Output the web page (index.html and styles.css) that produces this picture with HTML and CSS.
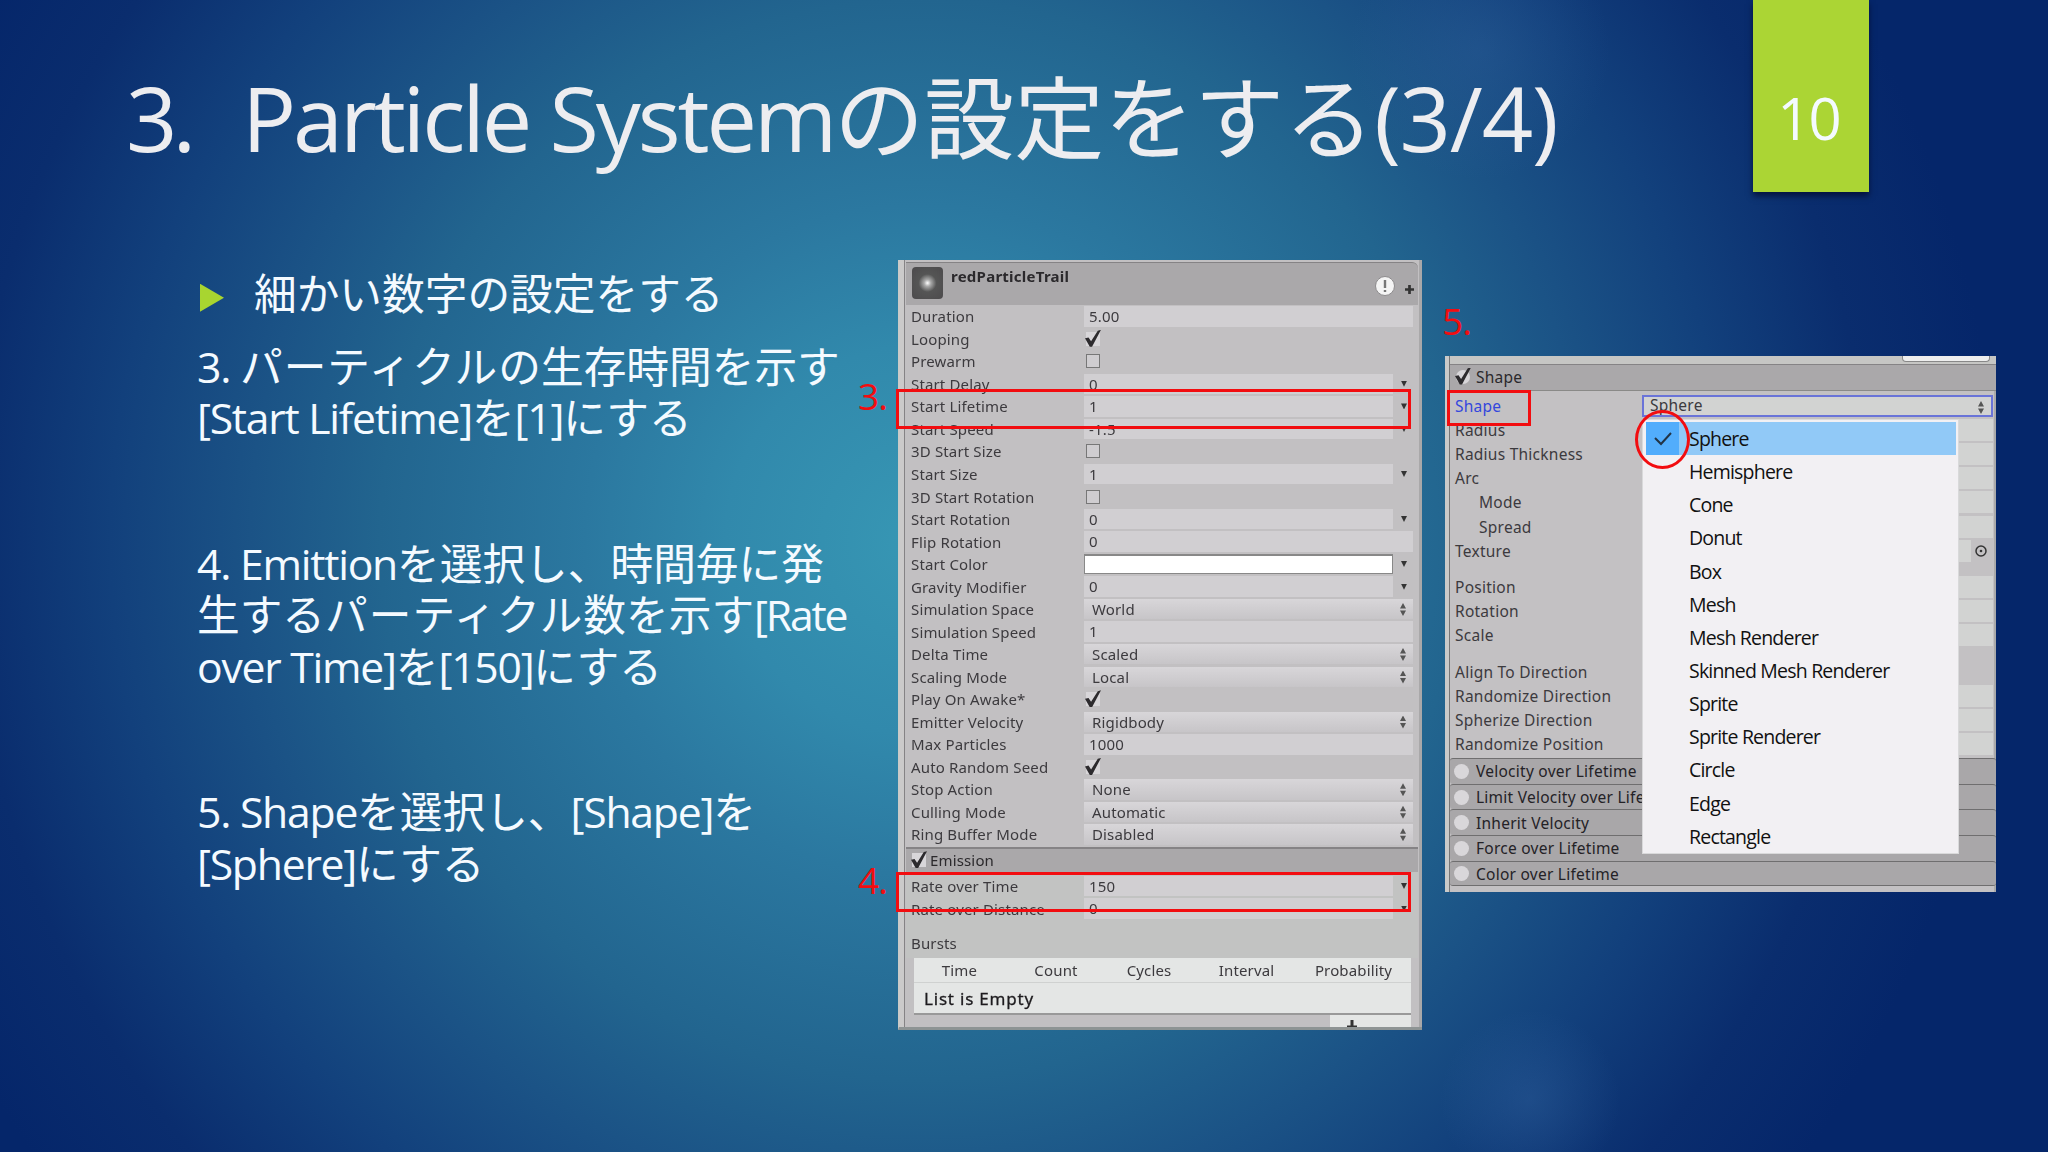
FILE: index.html
```
<!DOCTYPE html>
<html lang="ja">
<head>
  <meta charset="UTF-8" />
  <meta name="viewport" content="width=device-width, initial-scale=1.0" />
  <title>3. Particle Systemの設定をする(3/4)</title>
  <link rel="stylesheet" href="styles.css">
</head>
<body>

  <div class="slide">
    <header class="slide-header">
      <h1><span class="num">3.</span><span class="en">Particle System</span>の設定をする<span class="tail">(3/4)</span></h1>
      <div class="page-number">10</div>
    </header>

    <main class="content">
      <div class="text">
        <p class="bullet"><span class="arrow"></span>細かい数字の設定をする</p>
        <p><span class="en">3. </span><span class="kana">パーティクル</span>の生存時間を示す<br><span class="en">[Start Lifetime]</span>を<span class="en">[1]</span>にする</p>
        <p>&nbsp;</p>
        <p><span class="en">4. Emittion</span>を選択し、時間毎に発<br>生する<span class="kana">パーティクル</span>数を示す<span class="en rate">[Rate</span><br><span class="en">over Time]</span>を<span class="en">[150]</span>にする</p>
        <p>&nbsp;</p>
        <p><span class="en">5. Shape</span>を選択し、<span class="en">[Shape]</span>を<br><span class="en">[Sphere]</span>にする</p>
      </div>

      <!-- Particle System inspector -->
      <div class="shot shot-main">
        <div class="inspector">
          <div class="ps-head">
            <span class="ps-icon"></span>
            <b>redParticleTrail</b>
            <svg class="ps-info" viewBox="0 0 22 22"><circle cx="11" cy="11" r="9.5" fill="#f4f4f4" stroke="#8d8b8d"/><path d="M11 5v8M11 15v2" stroke="#777" stroke-width="2.4"/></svg>
            <svg class="ps-plus" viewBox="0 0 10 10"><path d="M5 0v10M0 5h10" stroke="#333" stroke-width="3"/></svg>
          </div>
          <div class="rows">
            <div class="row"><label>Duration</label><span class="field">5.00</span></div>
            <div class="row"><label>Looping</label><span class="check on"></span></div>
            <div class="row"><label>Prewarm</label><span class="check"></span></div>
            <div class="row"><label>Start Delay</label><span class="field">0</span><i class="down"></i></div>
            <div class="row"><label>Start Lifetime</label><span class="field">1</span><i class="down"></i></div>
            <div class="row"><label>Start Speed</label><span class="field">-1.5</span><i class="down"></i></div>
            <div class="row"><label>3D Start Size</label><span class="check"></span></div>
            <div class="row"><label>Start Size</label><span class="field">1</span><i class="down"></i></div>
            <div class="row"><label>3D Start Rotation</label><span class="check"></span></div>
            <div class="row"><label>Start Rotation</label><span class="field">0</span><i class="down"></i></div>
            <div class="row"><label>Flip Rotation</label><span class="field">0</span></div>
            <div class="row"><label>Start Color</label><span class="field color"></span><i class="down"></i></div>
            <div class="row"><label>Gravity Modifier</label><span class="field">0</span><i class="down"></i></div>
            <div class="row"><label>Simulation Space</label><span class="field popup">World</span></div>
            <div class="row"><label>Simulation Speed</label><span class="field">1</span></div>
            <div class="row"><label>Delta Time</label><span class="field popup">Scaled</span></div>
            <div class="row"><label>Scaling Mode</label><span class="field popup">Local</span></div>
            <div class="row"><label>Play On Awake*</label><span class="check on"></span></div>
            <div class="row"><label>Emitter Velocity</label><span class="field popup">Rigidbody</span></div>
            <div class="row"><label>Max Particles</label><span class="field">1000</span></div>
            <div class="row"><label>Auto Random Seed</label><span class="check on"></span></div>
            <div class="row"><label>Stop Action</label><span class="field popup">None</span></div>
            <div class="row"><label>Culling Mode</label><span class="field popup">Automatic</span></div>
            <div class="row"><label>Ring Buffer Mode</label><span class="field popup">Disabled</span></div>
          </div>
          <div class="module"><span class="check on"></span>Emission</div>
          <div class="rows emission">
            <div class="row"><label>Rate over Time</label><span class="field">150</span><i class="down"></i></div>
            <div class="row"><label>Rate over Distance</label><span class="field">0</span><i class="down"></i></div>
            <div class="bursts">Bursts</div>
          </div>
          <div class="table">
            <div class="table-head"><span>Time</span><span>Count</span><span>Cycles</span><span>Interval</span><span>Probability</span></div>
            <div class="table-empty">List is Empty</div>
          </div>
          <div class="table-foot"><span class="tab"><svg viewBox="0 0 12 8"><path d="M6 0v8M1 7h10" stroke="#333" stroke-width="3"/></svg></span></div>
        </div>
        <div class="mark mark-lifetime"></div>
        <div class="mark mark-rate"></div>
        <span class="no no-3">3.</span>
        <span class="no no-4">4.</span>
      </div>

      <!-- Shape module with the popup open -->
      <div class="shot shot-shape">
        <div class="shape-panel">
          <div class="strip"><span></span></div>
          <div class="module"><span class="check on"></span>Shape</div>
          <div class="rows">
            <div class="row active"><label>Shape</label><span class="field popup">Sphere</span></div>
            <div class="row"><label>Radius</label><span class="field"></span></div>
            <div class="row"><label>Radius Thickness</label><span class="field"></span></div>
            <div class="row"><label>Arc</label><span class="field"></span></div>
            <div class="row indent"><label>Mode</label><span class="field popup"></span></div>
            <div class="row indent"><label>Spread</label><span class="field"></span></div>
            <div class="row"><label>Texture</label><span class="field object"></span><svg class="picker" viewBox="0 0 14 14"><circle cx="7" cy="7" r="5" fill="none" stroke="#333" stroke-width="1.5"/><circle cx="7" cy="7" r="1.3" fill="#333"/></svg></div>
            <div class="row gap"><label>Position</label><span class="field"></span></div>
            <div class="row"><label>Rotation</label><span class="field"></span></div>
            <div class="row"><label>Scale</label><span class="field"></span></div>
            <div class="row gap"><label>Align To Direction</label></div>
            <div class="row"><label>Randomize Direction</label><span class="field"></span></div>
            <div class="row"><label>Spherize Direction</label><span class="field"></span></div>
            <div class="row"><label>Randomize Position</label><span class="field"></span></div>
          </div>
          <div class="fold">Velocity over Lifetime</div>
          <div class="fold">Limit Velocity over Life</div>
          <div class="fold">Inherit Velocity</div>
          <div class="fold">Force over Lifetime</div>
          <div class="fold">Color over Lifetime</div>
        </div>
        <ul class="menu">
          <li class="selected"><svg viewBox="0 0 33 33"><path d="M9 16l6 6 10-11" fill="none" stroke="#234" stroke-width="2"/></svg>Sphere</li>
          <li>Hemisphere</li>
          <li>Cone</li>
          <li>Donut</li>
          <li>Box</li>
          <li>Mesh</li>
          <li>Mesh Renderer</li>
          <li>Skinned Mesh Renderer</li>
          <li>Sprite</li>
          <li>Sprite Renderer</li>
          <li>Circle</li>
          <li>Edge</li>
          <li>Rectangle</li>
        </ul>
        <div class="mark mark-shape"></div>
        <div class="mark mark-circle"></div>
        <span class="no no-5">5.</span>
      </div>
    </main>
  </div>

</body>
</html>
```
FILE: styles.css
```
* {
  box-sizing: border-box;
  margin: 0;
  padding: 0;
}

body {
  font-family: "Open Sans", "Noto Sans CJK JP", sans-serif;
  color: #f4faff;
  overflow: hidden;
}

.slide {
  width: 2048px;
  height: 1152px;
  overflow: hidden;
  background:
    radial-gradient(circle 90px at 1530px 1100px, rgba(60, 110, 170, 0.3), transparent),
    radial-gradient(circle 130px at 1480px 50px, rgba(60, 110, 170, 0.25), transparent),
    radial-gradient(circle 1080px at 920px 540px, #3797b4 0%, #3189ac 18%, #2b78a0 31%, #22658f 50%, #1b5386 62%, #12407c 75%, #0a2d6e 88%, #05266a 100%);
}

.slide-header {
  display: flex;
  justify-content: space-between;
  height: 260px;
  padding: 0 179px 0 126px;
}

h1 {
  padding-top: 52px;
  font-size: 90px;
  font-weight: 400;
  line-height: 130px;
  white-space: nowrap;
  color: #ededf0;
}

h1 .num {
  display: inline-block;
  width: 116px;
  letter-spacing: -5px;
}

h1 .en {
  letter-spacing: -3.1px;
}

h1 .tail {
  letter-spacing: -1.2px;
}

.page-number {
  width: 116px;
  height: 192px;
  padding: 78px 5px 0 0;
  background: #abd534;
  box-shadow: 0 4px 6px rgba(0, 0, 30, 0.6);
  font-size: 58px;
  line-height: 80px;
  letter-spacing: -2px;
  text-align: center;
}

.content {
  display: flex;
  align-items: flex-start;
}

.text {
  width: 898px;
  padding: 8px 0 0 197px;
  font-size: 42.7px;
  line-height: 51.5px;
  white-space: nowrap;
}

.text p {
  margin-bottom: 21.3px;
}

.text .en {
  letter-spacing: -1.25px;
}

.text .rate {
  letter-spacing: -2.2px;
}

.kana {
  letter-spacing: 1px;
}

.bullet {
  display: flex;
  align-items: center;
}

.arrow {
  width: 24px;
  height: 28px;
  margin: 8px 30px 0 3px;
  background: #a8d530;
  clip-path: polygon(0 0, 100% 50%, 0 100%);
}

/* Unity editor captures */

.shot {
  position: relative;
  font-family: "Noto Sans", sans-serif;
  font-size: 15px;
  letter-spacing: 0.15px;
  color: #3c3a3e;
}

.shot-main {
  width: 524px;
  height: 770px;
}

.inspector {
  height: 770px;
  padding: 2px 4px 0 7px;
  background: #c2c0c2;
  border-left: 1px solid #c9cac6;
  border-bottom: 3px solid #8e9494;
  box-shadow: inset 5px 0 #cbcaca, inset 6px 0 #858385, inset -3px 0 #a9a8a9;
  overflow: hidden;
  filter: blur(0.6px);
}

.ps-head {
  display: flex;
  height: 43px;
  padding: 4px 4px 0 6px;
  background: #aaa8aa;
  border-top: 1px solid #858385;
  border-radius: 0 6px 0 0;
  color: #2b292c;
}

.ps-head b {
  flex: 1;
  padding-left: 8px;
  font-size: 15px;
  line-height: 18px;
  letter-spacing: 0.25px;
}

.ps-icon {
  width: 31px;
  height: 32px;
  border-radius: 4px;
  background: radial-gradient(circle, #fff 0, #aaa 15%, #555 40%, #4c4a4c 100%);
}

.ps-info {
  width: 22px;
  height: 22px;
  margin: 8px 9px 0 0;
}

.ps-plus {
  width: 9px;
  height: 9px;
  margin-top: 18px;
}

.row {
  display: flex;
  align-items: center;
  height: 22.54px;
  padding-left: 5px;
}

.row label {
  width: 173px;
  white-space: nowrap;
}

.field {
  flex: 1;
  height: 20.5px;
  margin-right: 5px;
  padding-left: 5px;
  background: #d1cfd2;
  line-height: 20px;
}

.field:has(+ .down) {
  margin-right: 8px;
}

.popup {
  display: flex;
  justify-content: space-between;
  padding: 0 7px 0 8px;
  background: linear-gradient(#d8d6d9, #c7c5c8);
}

/* double arrow of a popup field */
.popup::after {
  content: "";
  width: 6px;
  height: 13px;
  margin-top: 4px;
  background: #555;
  clip-path: polygon(50% 0, 100% 42%, 0 42%, 0 58%, 100% 58%, 50% 100%, 0 58%, 0 42%);
}

.color {
  background: #fff;
  border: 1px solid #888;
  border-top-width: 2px;
}

.down {
  width: 6px;
  height: 6px;
  margin-right: 11px;
  background: #333;
  clip-path: polygon(0 0, 100% 0, 50% 100%);
}

.check {
  width: 14px;
  height: 14px;
  margin-left: 2px;
  border: 1px solid #777;
  background: #cfcdd0;
}

.check.on {
  border-color: transparent;
  background: #d8d6d9;
  position: relative;
}

.check.on::after {
  content: "";
  position: absolute;
  left: -2px;
  top: -3px;
  width: 16px;
  height: 17px;
  background: #2d2b2e;
  clip-path: polygon(0 50%, 22% 45%, 38% 68%, 80% 5%, 100% 0, 44% 100%, 30% 100%);
}

.module {
  display: flex;
  align-items: center;
  height: 25px;
  margin-top: 1px;
  padding-left: 4px;
  background: #aaa8aa;
  border-top: 2px solid #858385;
  color: #2b292c;
}

.module .check {
  margin-right: 4px;
}

.emission {
  padding-top: 3px;
  background: #c2c3c2;
}

.bursts {
  padding: 13px 0 0 5px;
  height: 38px;
  line-height: 20px;
}

.table {
  margin: 0 7px 0 8px;
  background: #e4e6e5;
}

.table-head {
  display: grid;
  grid-template-columns: 91px 102px 84px 111px 1fr;
  height: 25px;
  padding-right: 6px;
  line-height: 24px;
  text-align: center;
  border-bottom: 1px solid #cfd1d0;
}

.table-empty {
  height: 32px;
  padding-left: 10px;
  border-bottom: 2px solid #999;
  font-size: 17px;
  line-height: 32px;
  letter-spacing: 0.8px;
  color: #1d1b1e;
  -webkit-text-stroke: 0.3px #1d1b1e;
}

.table-foot {
  display: flex;
  justify-content: flex-end;
  height: 14px;
  margin: 0 7px 0 8px;
}

.tab {
  width: 81px;
  padding-left: 16px;
  background: #e4e6e5;
}

.tab svg {
  display: block;
  width: 12px;
  height: 8px;
  margin-top: 5px;
}

/* shape panel */

.shot-shape {
  width: 551px;
  margin: 96px 0 0 23px;
}

.shape-panel {
  height: 536px;
  padding-left: 5px;
  background: #c3c1c3;
  box-shadow: inset 4px 0 #c9cac9, inset 5px 0 #777, inset -2px 0 #aaa;
  overflow: hidden;
  font-size: 15.5px;
  letter-spacing: 0.25px;
}

.strip {
  height: 8px;
  background: #c6c6c4;
}

.strip span {
  display: block;
  width: 88px;
  height: 6px;
  margin-left: 452px;
  background: #eee;
  border: 1px solid #888;
  border-top: 0;
  border-radius: 0 0 4px 4px;
}

.shape-panel .module {
  height: 27px;
  margin: 0;
  padding-bottom: 2px;
  border-top-width: 1px;
  border-bottom: 1px solid #8a8a88;
}

.shape-panel .module .check.on {
  border-radius: 50%;
  margin-right: 6px;
}

.shape-panel .rows {
  padding-top: 3px;
  height: 367px;
}

.shape-panel .row {
  height: 24.1px;
}

.shape-panel .row.gap {
  margin-top: 12.6px;
}

.shape-panel label {
  width: 187px;
}

.shape-panel .indent label {
  width: 163px;
  margin-left: 24px;
}

.shape-panel .field {
  height: 22px;
  margin-right: 3px;
  line-height: 18px;
  background: #d2d3d2;
}

.shape-panel .object {
  margin-right: 3px;
}

.picker {
  width: 14px;
  height: 14px;
  margin-right: 8px;
}

.active label {
  color: #3447dd;
}

.shape-panel .active .field {
  height: 22px;
  padding-left: 6px;
  border: 2px solid #6a74d8;
  line-height: 17px;
}

.fold {
  display: flex;
  align-items: center;
  height: 25.7px;
  padding-left: 4px;
  background: #a9a7a9;
  border-top: 1px solid #6f6e6f;
  border-radius: 3px;
  color: #242226;
}

.fold:last-child {
  border-bottom: 1px solid #6f6e6f;
}

.fold::before {
  content: "";
  width: 15px;
  height: 15px;
  margin-right: 7px;
  border-radius: 50%;
  background: #d9d7da;
}

.menu {
  position: absolute;
  left: 197px;
  top: 63px;
  width: 317px;
  height: 435px;
  padding: 2px 2px 0 3px;
  background: #f2f0f3;
  border: 1px solid #d9d9da;
  list-style: none;
  font-family: "Open Sans", sans-serif;
  font-size: 19.5px;
  color: #111;
}

.menu li {
  height: 33.15px;
  padding-left: 43px;
  line-height: 33px;
  letter-spacing: -0.8px;
}

.menu .selected {
  display: flex;
  padding-left: 0;
  background: #91c9f7;
}

.menu svg {
  width: 33px;
  height: 33px;
  margin-right: 10px;
  background: #52adfc;
}

/* red annotations */

.mark {
  position: absolute;
  border: 3px solid #f20d10;
}

.mark-lifetime {
  left: -2px;
  top: 129px;
  width: 515px;
  height: 40px;
}

.mark-rate {
  left: -2px;
  top: 612px;
  width: 515px;
  height: 40px;
}

.mark-shape {
  left: 2px;
  top: 34px;
  width: 84px;
  height: 36px;
}

.mark-circle {
  left: 190px;
  top: 54px;
  width: 55px;
  height: 59px;
  border-radius: 50%;
}

.no {
  position: absolute;
  font-family: "Open Sans", sans-serif;
  font-size: 37px;
  line-height: 50px;
  letter-spacing: -1px;
  color: #f20d10;
}

.no-3 {
  left: -40px;
  top: 111px;
}

.no-4 {
  left: -40px;
  top: 595px;
}

.no-5 {
  left: -3px;
  top: -60px;
}
```
